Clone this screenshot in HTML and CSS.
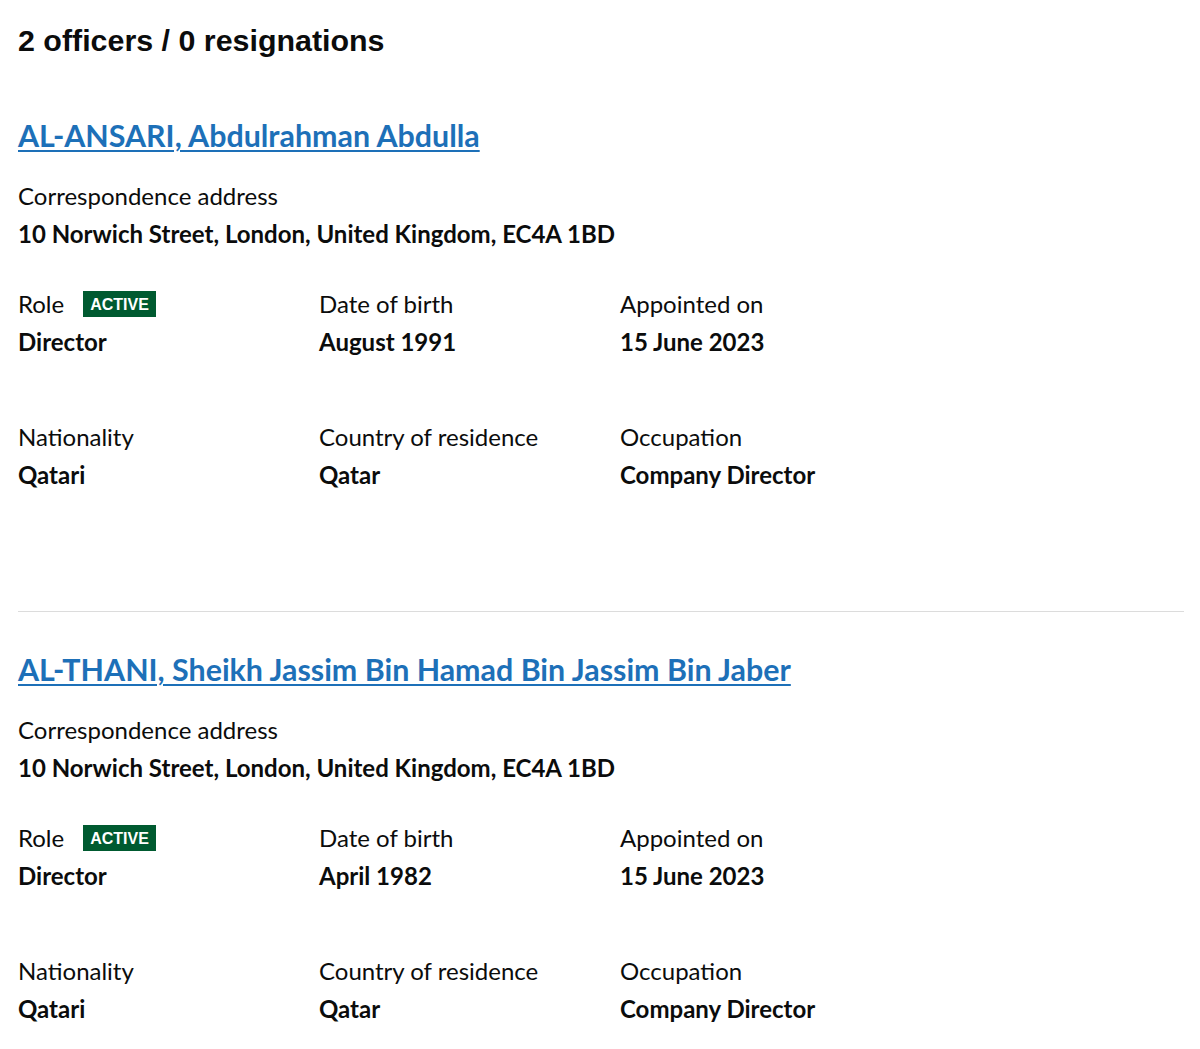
FILE: index.html
```html
<!DOCTYPE html>
<html lang="en">
<head>
<meta charset="utf-8">
<title>Officers</title>
<link rel="stylesheet" href="styles.css">
</head>
<body>
<main class="page">
  <h2 class="count">2 officers / 0 resignations</h2>

  <section class="officer">
    <h3 class="name"><a href="#">AL-ANSARI, Abdulrahman Abdulla</a></h3>
    <dl class="field address">
      <dt>Correspondence address</dt>
      <dd>10 Norwich Street, London, United Kingdom, EC4A 1BD</dd>
    </dl>
    <div class="row">
      <dl class="field">
        <dt>Role <span class="tag">ACTIVE</span></dt>
        <dd>Director</dd>
      </dl>
      <dl class="field">
        <dt>Date of birth</dt>
        <dd>August 1991</dd>
      </dl>
      <dl class="field">
        <dt>Appointed on</dt>
        <dd>15 June 2023</dd>
      </dl>
    </div>
    <div class="row row-last">
      <dl class="field">
        <dt>Nationality</dt>
        <dd>Qatari</dd>
      </dl>
      <dl class="field">
        <dt>Country of residence</dt>
        <dd>Qatar</dd>
      </dl>
      <dl class="field">
        <dt>Occupation</dt>
        <dd>Company Director</dd>
      </dl>
    </div>
  </section>

  <hr class="divider">

  <section class="officer">
    <h3 class="name"><a href="#">AL-THANI, Sheikh Jassim Bin Hamad Bin Jassim Bin Jaber</a></h3>
    <dl class="field address">
      <dt>Correspondence address</dt>
      <dd>10 Norwich Street, London, United Kingdom, EC4A 1BD</dd>
    </dl>
    <div class="row">
      <dl class="field">
        <dt>Role <span class="tag">ACTIVE</span></dt>
        <dd>Director</dd>
      </dl>
      <dl class="field">
        <dt>Date of birth</dt>
        <dd>April 1982</dd>
      </dl>
      <dl class="field">
        <dt>Appointed on</dt>
        <dd>15 June 2023</dd>
      </dl>
    </div>
    <div class="row row-last">
      <dl class="field">
        <dt>Nationality</dt>
        <dd>Qatari</dd>
      </dl>
      <dl class="field">
        <dt>Country of residence</dt>
        <dd>Qatar</dd>
      </dl>
      <dl class="field">
        <dt>Occupation</dt>
        <dd>Company Director</dd>
      </dl>
    </div>
  </section>
</main>
</body>
</html>
```

FILE: styles.css
```css
html, body {
  margin: 0;
  padding: 0;
  background: #ffffff;
}

body {
  font-family: "Lato", "Liberation Sans", sans-serif;
  color: #0b0c0c;
}

.page {
  padding: 22px 16px 0 18px;
}

.count {
  font-family: "Liberation Sans", Arial, sans-serif;
  font-weight: 700;
  font-size: 30.4px;
  line-height: 36px;
  margin: 0 0 62px 0;
}

.officer {
  margin: 0;
}

.name {
  margin: 0 0 31px 0;
  font-size: 30.4px;
  line-height: 30px;
  font-weight: 700;
}

.name a {
  color: #1d70b8;
  text-decoration: underline;
  text-decoration-thickness: 2px;
  text-underline-offset: 3px;
}

.field {
  margin: 0;
}

.field dt {
  font-size: 24px;
  line-height: 30px;
  font-weight: 400;
  margin: 0 0 8px 0;
  display: flex;
  align-items: center;
}

.field dd {
  margin: 0;
  font-size: 24px;
  line-height: 30px;
  font-weight: 700;
}

.address {
  margin-bottom: 40px;
}

.row {
  display: grid;
  grid-template-columns: 301px 301px 301px;
  margin-bottom: 65px;
}

.row-last {
  margin-bottom: 121px;
}

.officer:last-child .row-last {
  margin-bottom: 16px;
}

.tag {
  display: inline-block;
  margin-left: 19px;
  padding: 1px 7px 0 7px;
  background: #005a30;
  color: #ffffff;
  font-family: "Liberation Sans", Arial, sans-serif;
  font-weight: 700;
  font-size: 16px;
  line-height: 25px;
  height: 26px;
  box-sizing: border-box;
}

.divider {
  margin: 0 0 42px 0;
  border: 0;
  border-top: 1px solid #dcdcdc;
  height: 0;
}
```
